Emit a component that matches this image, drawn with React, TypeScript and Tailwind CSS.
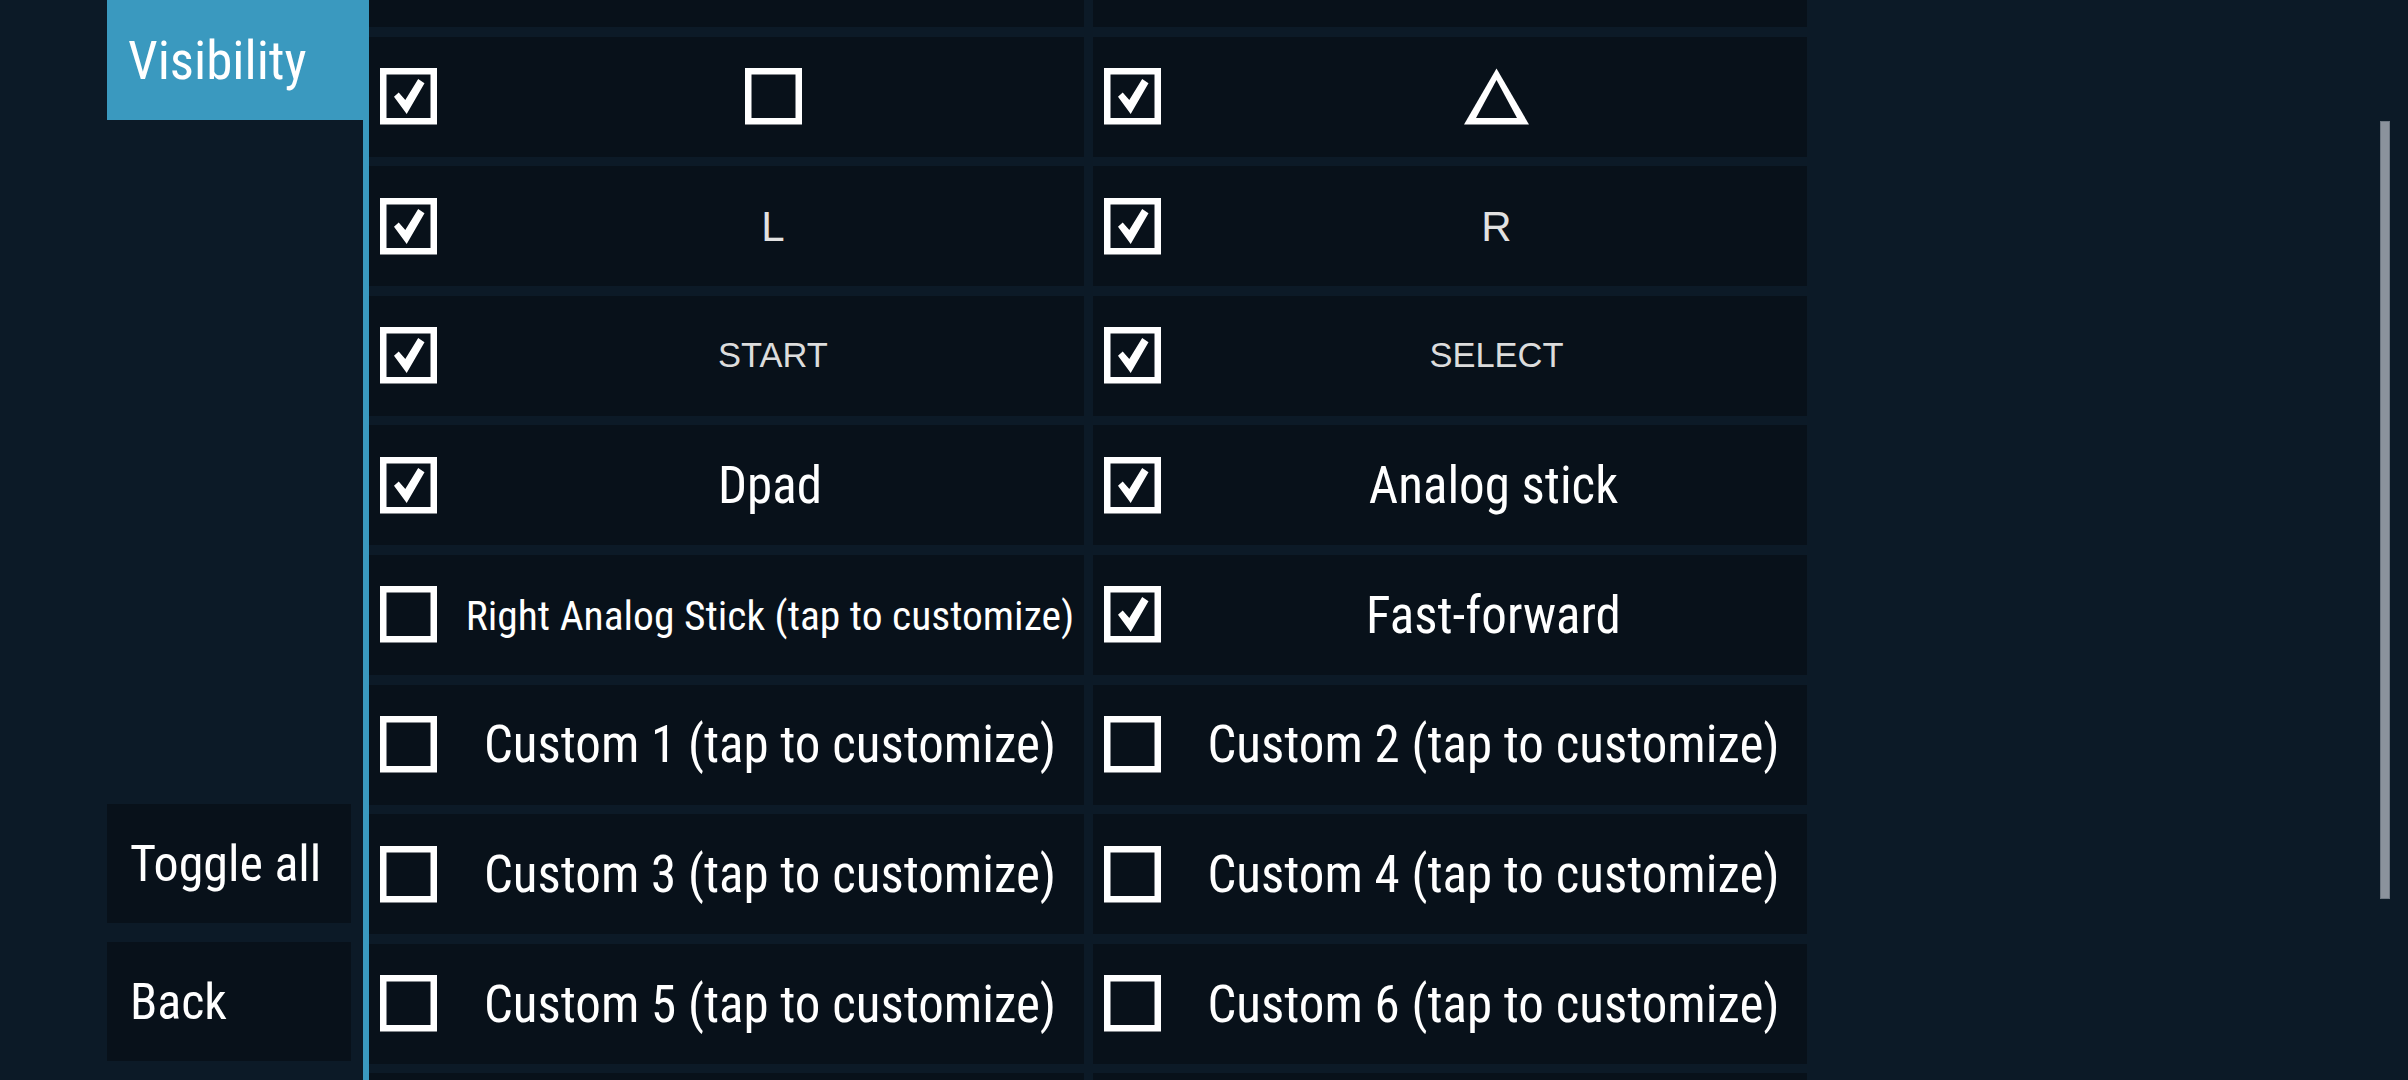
type CellData = { label: string; kind?: "icon" | "small" | "tiny" | "fit"; checked: boolean };

// first and last rows are scrolled almost out of view, only their cell edges show
const ROWS: CellData[][] = [
  [
    { label: "square", kind: "icon", checked: true },
    { label: "triangle", kind: "icon", checked: true },
  ],
  [
    { label: "L", kind: "small", checked: true },
    { label: "R", kind: "small", checked: true },
  ],
  [
    { label: "START", kind: "tiny", checked: true },
    { label: "SELECT", kind: "tiny", checked: true },
  ],
  [
    { label: "Dpad", checked: true },
    { label: "Analog stick", checked: true },
  ],
  [
    { label: "Right Analog Stick (tap to customize)", kind: "fit", checked: false },
    { label: "Fast-forward", checked: true },
  ],
  [
    { label: "Custom 1 (tap to customize)", checked: false },
    { label: "Custom 2 (tap to customize)", checked: false },
  ],
  [
    { label: "Custom 3 (tap to customize)", checked: false },
    { label: "Custom 4 (tap to customize)", checked: false },
  ],
  [
    { label: "Custom 5 (tap to customize)", checked: false },
    { label: "Custom 6 (tap to customize)", checked: false },
  ],
];

function CheckBox({ checked }: { checked: boolean }) {
  return (
    <svg viewBox="0 0 57 57" className="w-[57px] h-[57px] flex-shrink-0">
      <rect x="3.25" y="3.25" width="50.5" height="50" fill="none" stroke="#ffffff" strokeWidth="6.5" />
      {checked && (
        <polygon points="14,28.7 18.7,24.5 25.3,32 38.2,11 44.5,15.3 26.7,46" fill="#ffffff" />
      )}
    </svg>
  );
}

function ButtonIcon({ name }: { name: string }) {
  if (name === "square") {
    return (
      <svg viewBox="0 0 57 57" className="w-[57px] h-[57px]">
        <rect x="3.25" y="3.25" width="50.5" height="50" fill="none" stroke="#ffffff" strokeWidth="6.5" />
      </svg>
    );
  }
  return (
    <svg viewBox="0 0 65 57" className="w-[65px] h-[57px]">
      <polygon points="32.5,0.5 65,56.5 0,56.5" fill="#ffffff" />
      <polygon points="32.5,12 53,50 12,50" fill="#08111a" />
    </svg>
  );
}

function Label({ label, kind }: { label: string; kind?: string }) {
  if (kind === "icon") return <ButtonIcon name={label} />;
  if (kind === "small") {
    return <span className="font-['Liberation_Sans',sans-serif] text-[42px] text-[#e2e2e2]">{label}</span>;
  }
  if (kind === "tiny") {
    return <span className="font-['Liberation_Sans',sans-serif] text-[34.5px] text-[#dcdcdc]">{label}</span>;
  }
  if (kind === "fit") {
    return <span className="pt-[2px] pr-[6px] text-[41.5px] font-[450] [font-stretch:75%] whitespace-nowrap">{label}</span>;
  }
  return <span className="pt-[2px] pr-[6px] text-[51px] font-[450] [font-stretch:75%] whitespace-nowrap">{label}</span>;
}

function Cell({ label, kind, checked }: CellData) {
  return (
    <div className="flex items-center pl-[11px] bg-[#08111a] min-w-0">
      <CheckBox checked={checked} />
      <div className="flex-1 ml-[25px] flex items-center justify-center min-w-0">
        <Label label={label} kind={kind} />
      </div>
    </div>
  );
}

function SideButton({ children }: { children: React.ReactNode }) {
  return (
    <div className="h-[119px] w-[244px] pl-[23px] pt-[1px] flex items-center bg-[#08111a] text-[50px] font-[450] [font-stretch:75%]">
      {children}
    </div>
  );
}

function EmptyRow() {
  return (
    <div className="h-[120px] flex-shrink-0 grid grid-cols-[715px_714px] gap-x-[9px]">
      <div className="bg-[#08111a]" />
      <div className="bg-[#08111a]" />
    </div>
  );
}

export default function App() {
  return (
    <div className="relative flex h-[1080px] w-[2408px] overflow-hidden bg-[#0c1a27] text-white font-['Roboto',sans-serif]">
      <div className="ml-[107px] w-[262px] flex flex-col flex-shrink-0">
        <div className="h-[120px] pl-[21px] pt-[3px] flex items-center bg-[#3a99bf] text-[53px] font-[450] [font-stretch:75%]">
          Visibility
        </div>
        <div className="flex-1 border-r-[6px] border-[#3a99bf] flex flex-col justify-end gap-[19px] pb-[19px]">
          <SideButton>Toggle all</SideButton>
          <SideButton>Back</SideButton>
        </div>
      </div>

      <div className="w-[1438px] -mt-[93px] flex flex-col gap-[9.6px]">
        <EmptyRow />
        {ROWS.map((row, i) => (
          <div key={i} className="h-[120px] flex-shrink-0 grid grid-cols-[715px_714px] gap-x-[9px]">
            {row.map((cell) => (
              <Cell key={cell.label} {...cell} />
            ))}
          </div>
        ))}
        <EmptyRow />
      </div>

      <div className="absolute right-[18px] top-[121px] w-[10px] h-[778px] bg-[#8b929c] border border-[#6f7883]" />
    </div>
  );
}
